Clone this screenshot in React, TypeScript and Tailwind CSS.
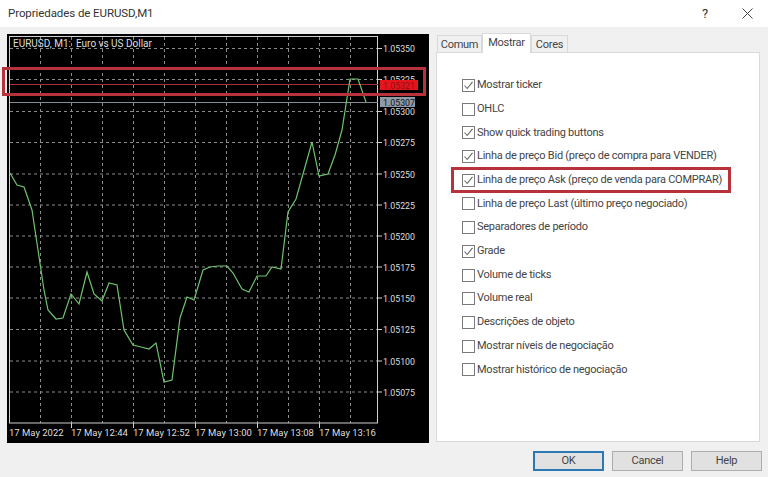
import React from 'react'

const gridX = [40, 71, 102, 133, 164, 195, 226, 257, 288, 319, 350]

const priceLevels: [string, number][] = [
  ['1.05350', 48.5],
  ['1.05325', 79.5],
  ['1.05300', 111.5],
  ['1.05275', 142.5],
  ['1.05250', 174],
  ['1.05225', 205],
  ['1.05200', 236],
  ['1.05175', 267],
  ['1.05150', 298],
  ['1.05125', 329.5],
  ['1.05100', 361],
  ['1.05075', 392],
]

const timeLabels: [string, number][] = [
  ['17 May 2022', 9],
  ['17 May 12:44', 71],
  ['17 May 12:52', 133],
  ['17 May 13:00', 195],
  ['17 May 13:08', 257],
  ['17 May 13:16', 319],
]

const priceLine =
  '10,173 17,185 24,187 32,210 38,250 44,290 48,310 56,319 63,318 71,294 79,304 87,272 94,294 102,301 109,283 117,285 124,330 133,345 141,347 149,349 156,343 164,382 172,380 180,318 187,297 194,300 203,270 210,267 218,266 227,266 233,273 242,289 249,292 257,276 266,276 272,267 281,269 288,212 296,199 312,142 319,176 328,174 335,155 342,130 350,79 358,79 366,102'

const options: [string, boolean][] = [
  ['Mostrar ticker', true],
  ['OHLC', false],
  ['Show quick trading buttons', true],
  ['Linha de preço Bid (preço de compra para VENDER)', true],
  ['Linha de preço Ask (preço de venda para COMPRAR)', true],
  ['Linha de preço Last (último preço negociado)', false],
  ['Separadores de período', false],
  ['Grade', true],
  ['Volume de ticks', false],
  ['Volume real', false],
  ['Descrições de objeto', false],
  ['Mostrar níveis de negociação', false],
  ['Mostrar histórico de negociação', false],
]

// chart is drawn in window coordinates, offset by the panel origin (7,34)
function Chart() {
  return (
    <svg width="422" height="409" viewBox="7 34 422 409" className="block">
      <rect x="7" y="34" width="422" height="409" fill="#000" />
      <g stroke="#8c8c8c" strokeWidth="1" strokeDasharray="3 3">
        {gridX.map((x) => (
          <line key={x} x1={x + 0.5} y1="37" x2={x + 0.5} y2="423" />
        ))}
        {priceLevels.map(([label, y]) => (
          <line key={label} x1="10" y1={y} x2="377" y2={y} />
        ))}
      </g>
      <rect x="9.5" y="36.5" width="368" height="386.5" fill="none" stroke="#d0d0d0" />
      <g stroke="#d0d0d0">
        {priceLevels.map(([label, y]) => (
          <line key={label} x1="378" y1={y} x2="382" y2={y} />
        ))}
        {timeLabels.slice(1).map(([label, x]) => (
          <line key={label} x1={x + 0.5} y1="423" x2={x + 0.5} y2="428" />
        ))}
      </g>
      <line x1="10" y1="84.5" x2="378" y2="84.5" stroke="#a83030" />
      <line x1="10" y1="102.5" x2="378" y2="102.5" stroke="#858d94" />
      <polyline points={priceLine} fill="none" stroke="#6fc46f" strokeWidth="1.2" />
      <g fill="#dedede" fontSize="8.8" className="font-['Roboto',sans-serif]">
        <text x="13" y="47" fontSize="10" xmlSpace="preserve">EURUSD, M1:  Euro vs US Dollar</text>
        {priceLevels.map(([label, y]) => (
          <text key={label} x="383" y={y + 3.5}>{label}</text>
        ))}
        {timeLabels.map(([label, x]) => (
          <text key={label} x={x} y="436" fontSize="9.5">{label}</text>
        ))}
      </g>
      <rect x="380" y="80" width="38" height="10" fill="#e8141c" />
      <text x="383" y="88.5" fill="#8c1015" fontSize="8.8" className="font-['Roboto',sans-serif]">1.05321</text>
      <rect x="380" y="97" width="35" height="10" fill="#8f9ba8" />
      <text x="383" y="105.5" fill="#10141a" fontSize="8.8" className="font-['Roboto',sans-serif]">1.05307</text>
    </svg>
  )
}

function Checkbox({ checked }: { checked: boolean }) {
  return (
    <span className="flex h-[13px] w-[13px] shrink-0 items-center justify-center border border-[#7a7a7a] bg-white">
      {checked && (
        <svg width="11" height="11" viewBox="0 0 11 11" fill="none" stroke="#666" strokeWidth="1.1">
          <path d="M1.5 5.5 L4.2 8.5 L9.5 1.8" />
        </svg>
      )}
    </span>
  )
}

function DialogButton({ label, primary = false }: { label: string; primary?: boolean }) {
  return (
    <button
      className={
        primary
          ? 'flex h-[20px] w-[71px] items-center justify-center border-2 border-[#2a78b4] bg-[#e1e1e1] text-[#444]'
          : 'flex h-[20px] w-[71px] items-center justify-center border border-[#adadad] bg-[#e1e1e1] text-[#444]'
      }
    >
      {label}
    </button>
  )
}

export default function App() {
  return (
    <div className="flex h-[477px] w-[768px] flex-col overflow-hidden bg-[#f0f0f0] font-['Roboto',sans-serif] text-[11px] tracking-[-0.25px] text-[#444]">
      {/* Title bar */}
      <div className="flex h-[27px] shrink-0 items-center justify-between bg-white pl-2 pr-[15px] text-[11.5px] tracking-[-0.08px] text-[#333]">
        <span>Propriedades de EURUSD,M1</span>
        <div className="flex items-center gap-[34px]">
          <span className="text-[13px]">?</span>
          <svg width="11" height="11" viewBox="0 0 11 11" stroke="#444" strokeWidth="1">
            <path d="M0.5 0.5 L10.5 10.5 M10.5 0.5 L0.5 10.5" />
          </svg>
        </div>
      </div>

      {/* Body */}
      <div className="relative flex flex-1 pl-[7px] pt-[7px]">
        <div className="h-[409px] w-[422px] shrink-0 tracking-normal">
          <Chart />
        </div>

        {/* Annotation over the chart */}
        <div className="absolute left-[2px] top-[40px] h-[29px] w-[424px] border-[3px] border-[#b8323c]" />

        {/* Options column */}
        <div className="ml-[7px] flex w-[332px] flex-col">
          <div className="flex h-[18px] items-end pl-px">
            <div className="flex h-[17px] w-[45px] items-center justify-center border border-b-0 border-[#d9d9d9] bg-[#f0f0f0] pt-[2px]">Comum</div>
            <div className="z-10 -mb-px flex h-[20px] w-[49px] items-center justify-center border border-b-0 border-[#d9d9d9] bg-white">Mostrar</div>
            <div className="flex h-[17px] w-[37px] items-center justify-center border border-b-0 border-[#d9d9d9] bg-[#f0f0f0] pt-[2px]">Cores</div>
          </div>
          <div className="h-[390px] w-[324px] border border-[#d9d9d9] bg-white pl-[25px] pt-[23.5px]">
            <div className="flex flex-col gap-[5.7px]">
              {options.map(([label, checked]) => (
                <div key={label} className="relative flex h-[18px] items-center gap-[2px]">
                  <Checkbox checked={checked} />
                  <span className="whitespace-nowrap">{label}</span>
                  {label.includes('Ask') && (
                    <div className="absolute left-[-11px] top-[-4px] h-[26px] w-[280px] border-[3px] border-[#b8323c]" />
                  )}
                </div>
              ))}
            </div>
          </div>
          <div className="mt-[9px] flex justify-end gap-[8px] pr-[6px]">
            <DialogButton label="OK" primary />
            <DialogButton label="Cancel" />
            <DialogButton label="Help" />
          </div>
        </div>
      </div>
    </div>
  )
}
